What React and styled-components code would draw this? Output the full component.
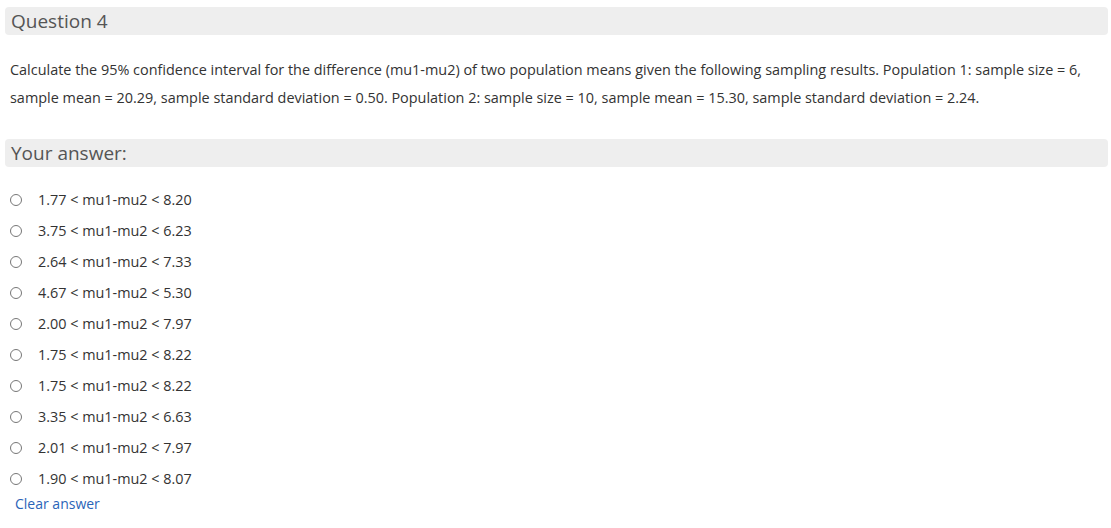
import React from "react";
import styled, { createGlobalStyle } from "styled-components";

const GlobalStyle = createGlobalStyle`
  body {
    margin: 0;
    background: #fff;
    font-family: "Open Sans", "Noto Sans", sans-serif;
    color: #333;
  }
`;

const Page = styled.div`
  width: 1103px;
  padding: 7px 0 0 5px;
`;

const Heading = styled.div`
  height: 28px;
  line-height: 28px;
  background: #eeeeee;
  border-radius: 4px;
  padding-left: 6px;
  font-size: 19px;
  color: #555;
`;

const QuestionText = styled.p`
  margin: 21px 0 27px 5px;
  font-size: 14.43px;
  line-height: 28px;
  color: #333;
`;

const Options = styled.div`
  margin-top: 17px;
  display: flex;
  flex-direction: column;
`;

const Option = styled.label`
  display: flex;
  align-items: center;
  height: 31px;
  font-size: 14.4px;
  color: #333;
`;

const Radio = styled.span`
  width: 10px;
  height: 10px;
  margin-left: 5px;
  margin-right: 16px;
  border: 1px solid #777;
  border-radius: 50%;
  background: #fff;
`;

const ClearLink = styled.a`
  display: block;
  margin: 1px 0 0 10px;
  line-height: 17px;
  font-size: 14px;
  color: #2a64b8;
  text-decoration: none;
`;

const answers = [
  ["1.77", "8.20"],
  ["3.75", "6.23"],
  ["2.64", "7.33"],
  ["4.67", "5.30"],
  ["2.00", "7.97"],
  ["1.75", "8.22"],
  ["1.75", "8.22"],
  ["3.35", "6.63"],
  ["2.01", "7.97"],
  ["1.90", "8.07"],
];

const App = () => (
  <Page>
    <GlobalStyle />
    <Heading>Question 4</Heading>
    <QuestionText>
      Calculate the 95% confidence interval for the difference (mu1-mu2) of two
      population means given the following sampling results. Population 1:
      sample size = 6, sample mean = 20.29, sample standard deviation = 0.50.
      Population 2: sample size = 10, sample mean = 15.30, sample standard
      deviation = 2.24.
    </QuestionText>
    <Heading>Your answer:</Heading>
    <Options>
      {answers.map(([lo, hi], i) => (
        <Option key={i}>
          <Radio />
          {lo} &lt; mu1-mu2 &lt; {hi}
        </Option>
      ))}
    </Options>
    <ClearLink href="#">Clear answer</ClearLink>
  </Page>
);

export default App;
